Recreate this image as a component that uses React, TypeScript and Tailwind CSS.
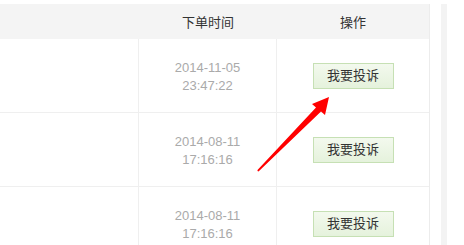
const rows = [
  { date: "2014-11-05", time: "23:47:22" },
  { date: "2014-08-11", time: "17:16:16" },
  { date: "2014-08-11", time: "17:16:16" },
];

const font = { fontFamily: '"Liberation Sans", "Noto Sans CJK SC", sans-serif' };

export default function App() {
  return (
    <div className="relative h-[245px] w-[464px] overflow-hidden bg-white" style={font}>
      <div className="flex pt-[4px]">
        <div className="w-[430px] shrink-0 border-r border-[#ececec]">
          <div className="grid h-[35px] grid-cols-[139px_138px_1fr] items-center bg-[#f4f4f4] pt-[2px] text-[13px] text-[#333]">
            <div />
            <div className="text-center">下单时间</div>
            <div className="text-center">操作</div>
          </div>
          {rows.map((r, i) => (
            <div
              key={i}
              className="grid h-[74px] grid-cols-[139px_138px_1fr] border-b border-[#efefef]"
            >
              <div className="border-r border-[#efefef]" />
              <div className="flex flex-col items-center justify-center border-r border-[#efefef] pt-[2px] text-[13px] leading-[18px] text-[#aaa]">
                <span>{r.date}</span>
                <span>{r.time}</span>
              </div>
              <div className="flex items-center justify-center pt-[1px]">
                <button
                  type="button"
                  className="h-[26px] w-[81px] border border-[#c6e0b4] bg-gradient-to-b from-[#f3f9ee] to-[#e5f2dc] text-[13px] text-[#333]"
                >
                  我要投诉
                </button>
              </div>
            </div>
          ))}
        </div>
        <div className="ml-[11px] h-[245px] w-[6px] bg-[#f3f3f3]" />
      </div>
      <svg
        className="pointer-events-none absolute left-0 top-0"
        width="464"
        height="245"
        viewBox="0 0 464 245"
      >
        <polygon points="257.5,171 257.5,170 316,107.5 312,104 329,97 325,115 321,111.5 258.5,171.5" fill="#ff0000" />
      </svg>
    </div>
  );
}
